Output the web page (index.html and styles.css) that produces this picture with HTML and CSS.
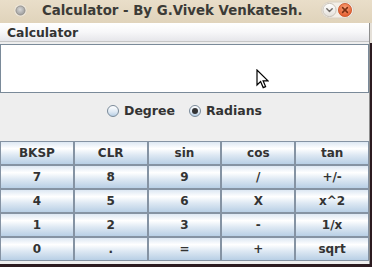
FILE: index.html
```html
<!DOCTYPE html>
<html>
<head>
<meta charset="utf-8">
<link rel="stylesheet" href="styles.css">
</head>
<body>
<div class="window">
  <div class="titlebar">
    <svg class="win-icon" width="13" height="13" viewBox="0 0 13 13">
      <defs>
        <radialGradient id="gi" cx="45%" cy="40%" r="60%">
          <stop offset="0" stop-color="#d8d8d8"/>
          <stop offset="1" stop-color="#9a9a9a"/>
        </radialGradient>
      </defs>
      <circle cx="6.5" cy="6.5" r="6" fill="#f1ebe0"/>
      <circle cx="6.5" cy="6.5" r="4.6" fill="url(#gi)" stroke="#8e8a84" stroke-width="0.8"/>
    </svg>
    <span class="title">Calculator - By G.Vivek Venkatesh.</span>
    <svg class="win-ctrls" width="34" height="18" viewBox="0 0 34 18">
      <defs>
        <linearGradient id="gm" x1="0" y1="0" x2="0" y2="1">
          <stop offset="0" stop-color="#ffffff"/>
          <stop offset="1" stop-color="#e4e0da"/>
        </linearGradient>
        <radialGradient id="gc" cx="50%" cy="35%" r="65%">
          <stop offset="0" stop-color="#f9a37a"/>
          <stop offset="1" stop-color="#e2572a"/>
        </radialGradient>
      </defs>
      <rect x="0.5" y="1" width="32" height="16" rx="8" fill="#f3eee6" stroke="#d9d0c2"/>
      <circle cx="8.5" cy="9" r="6.6" fill="url(#gm)" stroke="#c4bdb2" stroke-width="0.9"/>
      <path d="M5.8 7.8 L8.5 10.4 L11.2 7.8" fill="none" stroke="#6e6a66" stroke-width="1.4" stroke-linecap="round" stroke-linejoin="round"/>
      <circle cx="24" cy="9" r="6.6" fill="url(#gc)" stroke="#c9552a" stroke-width="0.8"/>
      <path d="M21.6 6.6 L26.4 11.4 M26.4 6.6 L21.6 11.4" stroke="#7a2e12" stroke-width="1.5" stroke-linecap="round"/>
    </svg>
  </div>
  <div class="main">
    <div class="frame">
      <div class="menubar"><span class="menu">Calculator</span></div>
      <div class="content">
        <div class="display">
          <svg class="pointer" width="13" height="20" viewBox="0 0 13 20">
            <path d="M1 1 L1 16 L4.6 12.6 L7.2 18.6 L9.6 17.6 L7.1 11.8 L12 11.8 Z" fill="#ffffff" stroke="#000000" stroke-width="1.2" stroke-linejoin="miter"/>
          </svg>
        </div>
        <div class="modes">
          <span class="radio"><span class="circle"></span>Degree</span>
          <span class="radio"><span class="circle on"></span>Radians</span>
        </div>
        <div class="keys">
          <button class="key">BKSP</button>
          <button class="key">CLR</button>
          <button class="key">sin</button>
          <button class="key">cos</button>
          <button class="key">tan</button>
          <button class="key">7</button>
          <button class="key">8</button>
          <button class="key">9</button>
          <button class="key">/</button>
          <button class="key">+/-</button>
          <button class="key">4</button>
          <button class="key">5</button>
          <button class="key">6</button>
          <button class="key">X</button>
          <button class="key">x^2</button>
          <button class="key">1</button>
          <button class="key">2</button>
          <button class="key">3</button>
          <button class="key">-</button>
          <button class="key">1/x</button>
          <button class="key">0</button>
          <button class="key">.</button>
          <button class="key">=</button>
          <button class="key">+</button>
          <button class="key">sqrt</button>
        </div>
        <div class="pad"></div>
      </div>
    </div>
    <div class="edge"><div class="edge-top"></div></div>
  </div>
  <div class="bottom"></div>
</div>
</body>
</html>
```
FILE: styles.css
```css
* { box-sizing: border-box; }
html, body { margin: 0; padding: 0; }
body {
  width: 372px;
  height: 267px;
  overflow: hidden;
  background: #2c1b20;
  font-family: "DejaVu Sans", sans-serif;
}
.window {
  width: 372px;
  display: flex;
  flex-direction: column;
}
.titlebar {
  height: 23px;
  display: flex;
  align-items: center;
  background: linear-gradient(#e9dec9, #e0d3bb);
  position: relative;
}
.win-icon {
  margin-left: 14px;
  margin-top: -3px;
  flex: none;
}
.title {
  margin-left: 15px;
  font-size: 13.33px;
  font-weight: bold;
  color: #3c3b37;
  white-space: nowrap;
  margin-top: -2px;
}
.win-ctrls {
  position: absolute;
  left: 321px;
  top: 1px;
}
.main {
  display: flex;
  height: 241px;
}
.frame {
  width: 369px;
  display: flex;
  flex-direction: column;
  background: #eeeeee;
}
.menubar {
  height: 19px;
  background: linear-gradient(#ffffff 0%, #f7f7f9 50%, #e6e6ea 100%);
  border-bottom: 1px solid #c6c6c6;
  display: flex;
  align-items: center;
  padding-left: 7px;
}
.menu {
  font-size: 12.4px;
  font-weight: bold;
  color: #333333;
  margin-top: 1px;
}
.content {
  flex: 1;
  display: flex;
  flex-direction: column;
  padding-top: 2px;
}
.display {
  height: 49px;
  background: #ffffff;
  border: 1px solid #7a8a99;
  position: relative;
}
.pointer {
  position: absolute;
  left: 255px;
  top: 24px;
}
.modes {
  height: 48px;
  display: flex;
  justify-content: center;
  align-items: flex-start;
  padding-top: 11px;
  gap: 14px;
}
.radio {
  display: flex;
  align-items: center;
  font-size: 12.5px;
  font-weight: bold;
  color: #333333;
  line-height: 14px;
}
.circle {
  width: 12px;
  height: 12px;
  border-radius: 50%;
  border: 1px solid #7a8a99;
  background: linear-gradient(#ffffff, #dde8f3 60%, #b8cfe5);
  margin-right: 5px;
  position: relative;
}
.circle.on::after {
  content: "";
  position: absolute;
  left: 2px;
  top: 2px;
  width: 6px;
  height: 6px;
  border-radius: 50%;
  background: #333333;
}
.keys {
  display: grid;
  grid-template-columns: repeat(5, 1fr);
  grid-template-rows: repeat(5, 24px);
  height: 120px;
}
.key {
  margin: 0;
  padding: 0;
  border: 1px solid #7a8a99;
  background: linear-gradient(#dde8f3 0%, #ffffff 30%, #dde8f3 60%, #b8cfe5 100%);
  font-family: "DejaVu Sans", sans-serif;
  font-size: 12px;
  font-weight: bold;
  color: #333333;
  display: flex;
  align-items: center;
  justify-content: center;
  outline: 1px solid #8593a3;
  outline-offset: -1px;
}
.pad {
  height: 3px;
}
.edge {
  width: 3px;
  border-left: 1px solid #8e8e8e;
  background: #2c1b20;
}
.edge-top {
  height: 20px;
  background: #e5e0d8;
}
.bottom {
  height: 3px;
  background: #2c1b20;
}
```
